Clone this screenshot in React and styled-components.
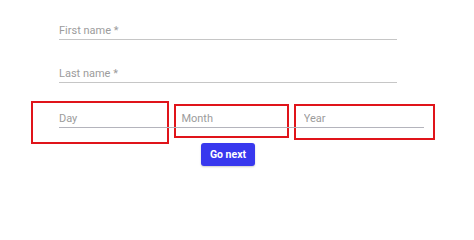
import React from "react";
import styled, { createGlobalStyle } from "styled-components";

const Global = createGlobalStyle`
  html, body { margin: 0; padding: 0; background: #ffffff; }
  body { font-family: Roboto, "Liberation Sans", Arial, sans-serif; }
  * { box-sizing: border-box; }
`;

const Page = styled.div`
  width: 474px;
  height: 220px;
  padding-top: 21px;
  padding-left: 59px;
`;

const Column = styled.form`
  width: 338px;
  display: flex;
  flex-direction: column;
`;

const Field = styled.label`
  display: block;
  margin-bottom: ${(p) => p.$gap || 0}px;
`;

const Input = styled.input`
  display: block;
  width: 100%;
  border: none;
  border-bottom: 1px solid #c6c6c6;
  outline: none;
  background: transparent;
  font-family: Roboto, "Liberation Sans", Arial, sans-serif;
  font-size: 11px;
  line-height: 16px;
  height: 19px;
  padding: 0;
  color: #333;
  &::placeholder { color: #9c9c9c; }
`;

const DateRow = styled.div`
  position: relative;
  display: flex;
  align-items: flex-start;
  gap: 5px;
  margin-left: -28px;
  width: 404px;
  &::after {
    content: "";
    position: absolute;
    left: 28px;
    width: 365px;
    top: 26px;
    height: 1px;
    background: #b4b4bc;
  }
`;

const DateBox = styled.div`
  width: ${(p) => p.$w}px;
  height: ${(p) => p.$h}px;
  margin-top: ${(p) => p.$top || 0}px;
  border: 2px solid #e0141a;
  padding-left: ${(p) => p.$pad}px;
  padding-top: ${(p) => p.$padTop}px;
`;

const DateInput = styled.input`
  display: block;
  width: 90px;
  border: none;
  outline: none;
  background: transparent;
  font-family: Roboto, "Liberation Sans", Arial, sans-serif;
  font-size: 11px;
  line-height: 16px;
  height: 16px;
  padding: 0;
  color: #333;
  &::placeholder { color: #9c9c9c; }
`;

const ButtonRow = styled.div`
  display: flex;
  justify-content: center;
  margin-top: -1px;
`;

const Button = styled.button`
  width: 54px;
  height: 23px;
  border: none;
  border-radius: 3px;
  background: #3838ee;
  color: #ffffff;
  font-family: Roboto, "Liberation Sans", Arial, sans-serif;
  font-weight: 700;
  font-size: 10.5px;
  padding: 0;
  box-shadow: 0 1px 2px rgba(0, 0, 0, 0.2);
`;

export default function App() {
  return (
    <>
      <Global />
      <Page>
        <Column onSubmit={(e) => e.preventDefault()}>
          <Field $gap={24}>
            <Input placeholder="First name *" />
          </Field>
          <Field $gap={18}>
            <Input placeholder="Last name *" />
          </Field>
          <DateRow>
            <DateBox $w={139} $h={43} $pad={26} $padTop={8}>
              <DateInput placeholder="Day" />
            </DateBox>
            <DateBox $w={115} $h={34} $top={3} $pad={5} $padTop={5}>
              <DateInput placeholder="Month" />
            </DateBox>
            <DateBox $w={142} $h={36} $top={3} $pad={8} $padTop={5}>
              <DateInput placeholder="Year" />
            </DateBox>
          </DateRow>
          <ButtonRow>
            <Button type="submit">Go next</Button>
          </ButtonRow>
        </Column>
      </Page>
    </>
  );
}
